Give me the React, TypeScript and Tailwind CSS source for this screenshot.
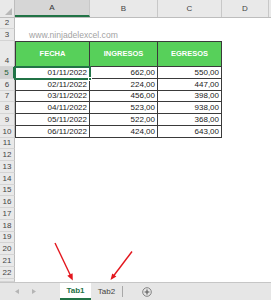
import React from "react";

const data: [string, string, string][] = [
  ["01/11/2022", "662,00", "550,00"],
  ["02/11/2022", "224,00", "447,00"],
  ["03/11/2022", "456,00", "398,00"],
  ["04/11/2022", "523,00", "938,00"],
  ["05/11/2022", "522,00", "368,00"],
  ["06/11/2022", "424,00", "643,00"],
];

function RowHead({ n, selected }: { n?: number; selected?: boolean }) {
  return (
    <div
      className={
        "w-[15px] shrink-0 h-full flex items-end justify-center pb-[1px] text-[8px] leading-none border-b border-[#d4d4d4] " +
        (selected
          ? "bg-[#d2d2d2] text-[#1e5e36] border-r-2 border-r-[#217346]"
          : "bg-[#e9e9e9] text-[#444] border-r border-r-[#bdbdbd]")
      }
    >
      {n}
    </div>
  );
}

export default function App() {
  const empty = Array.from({ length: 12 }, (_, i) => 11 + i);
  return (
    <div className="relative w-[271px] h-[300px] overflow-hidden bg-white flex flex-col font-['Liberation_Sans',Arial,sans-serif]">
      <div className="flex-1 overflow-hidden flex flex-col">
        {/* column header */}
        <div className="h-[17.5px] shrink-0 flex bg-[#e9e9e9] border-b border-[#bdbdbd] text-[8px] text-[#444] leading-none">
          <div className="w-[15px] shrink-0 relative border-r border-[#bdbdbd]">
            <div className="absolute right-[2px] bottom-[2px] w-0 h-0 border-l-[7px] border-l-transparent border-b-[7px] border-b-[#b8b8b8]" />
          </div>
          <div className="w-[75px] shrink-0 flex items-end justify-center pb-[3px] bg-[#d6d6d6] border-r border-[#c8c8c8] border-b-2 border-b-[#217346] text-[#333]">A</div>
          <div className="w-[68px] shrink-0 flex items-end justify-center pb-[4px] border-r border-[#c8c8c8]">B</div>
          <div className="w-[64px] shrink-0 flex items-end justify-center pb-[4px] border-r border-[#c8c8c8]">C</div>
          <div className="w-[47px] shrink-0 flex items-end justify-center pb-[4px] border-r border-[#c8c8c8]">D</div>
          <div className="flex-1" />
        </div>
        {/* row 2 */}
        <div className="h-[11.75px] shrink-0 flex">
          <RowHead n={2} />
        </div>
        {/* row 3 */}
        <div className="h-[11.75px] shrink-0 flex">
          <RowHead n={3} />
          <div className="pl-[14px] flex items-center whitespace-nowrap text-[8.6px] leading-none text-[#a3a3a3]">
            www.ninjadelexcel.com
          </div>
        </div>
        {/* row 4 header */}
        <div className="h-[26px] shrink-0 flex">
          <RowHead n={4} />
          <div className="w-[75px] shrink-0 bg-[#57d05a] border border-[#3a3a3a] flex items-center justify-center text-white font-bold text-[7.5px] leading-none">FECHA</div>
          <div className="w-[68px] shrink-0 bg-[#57d05a] border-y border-r border-[#3a3a3a] flex items-center justify-center text-white font-bold text-[7.5px] leading-none">INGRESOS</div>
          <div className="w-[64px] shrink-0 bg-[#57d05a] border-y border-r border-[#3a3a3a] flex items-center justify-center text-white font-bold text-[7.5px] leading-none">EGRESOS</div>
        </div>
        {data.map((r, i) => (
          <div key={i} className="h-[11.75px] shrink-0 flex">
            <RowHead n={5 + i} selected={i === 0} />
            <div className="w-[75px] shrink-0 border-l border-b border-r border-[#3a3a3a] flex items-end justify-end pr-[2px] pb-[1px] text-[8px] leading-none text-[#1a1a1a]">{r[0]}</div>
            <div className="w-[68px] shrink-0 border-b border-r border-[#3a3a3a] flex items-end justify-end pr-[2px] pb-[1px] text-[8px] leading-none text-[#1a1a1a]">{r[1]}</div>
            <div className="w-[64px] shrink-0 border-b border-r border-[#3a3a3a] flex items-end justify-end pr-[2px] pb-[1px] text-[8px] leading-none text-[#1a1a1a]">{r[2]}</div>
          </div>
        ))}
        {empty.map((n) => (
          <div key={n} className="h-[11.75px] shrink-0 flex">
            <RowHead n={n} />
          </div>
        ))}
        <div className="flex-1 flex">
          <RowHead />
        </div>
      </div>
      {/* tab bar */}
      <div className="h-[18px] shrink-0 bg-[#e6e6e6] border-t border-[#c6c6c6] flex items-stretch text-[8px] leading-none">
        <div className="w-[60px] shrink-0 flex items-center">
          <svg width="4" height="5" viewBox="0 0 4 5" className="ml-[15px]">
            <path d="M4 0 L0 2.5 L4 5 Z" fill="#b5b5b5" />
          </svg>
          <svg width="4" height="5" viewBox="0 0 4 5" className="ml-[13px]">
            <path d="M0 0 L4 2.5 L0 5 Z" fill="#b5b5b5" />
          </svg>
        </div>
        <div className="w-[31px] shrink-0 bg-white border-b-2 border-[#217346] flex items-center justify-center font-bold text-[#1e7145]">Tab1</div>
        <div className="w-[31px] shrink-0 flex items-center justify-center text-[#444]">Tab2</div>
        <div className="w-px my-[3px] bg-[#a8a8a8]" />
        <div className="flex items-center ml-[19px]">
          <svg width="10" height="10" viewBox="0 0 10 10">
            <circle cx="5" cy="5" r="4.3" fill="none" stroke="#777" strokeWidth="0.9" />
            <path d="M5 2.6 V7.4 M2.6 5 H7.4" stroke="#555" strokeWidth="1.1" />
          </svg>
        </div>
      </div>
      {/* selection of A5 */}
      <div className="absolute left-[14px] top-[66px] w-[77px] h-[13.5px] border-2 border-[#217346] pointer-events-none">
        <div className="absolute -right-[3px] -bottom-[3px] w-[4px] h-[4px] bg-[#217346] border border-white" />
      </div>
      {/* red arrows */}
      <svg className="absolute left-0 top-0 pointer-events-none" width="271" height="300" viewBox="0 0 271 300">
        <line x1="55" y1="243" x2="70.5" y2="275.5" stroke="#e3161d" strokeWidth="1.4" />
        <polygon points="72.8,280.5 67.3,275.8 72.6,273.3" fill="#e3161d" />
        <line x1="132" y1="251.5" x2="113.5" y2="276" stroke="#e3161d" strokeWidth="1.4" />
        <polygon points="110.5,280 112.2,273.5 116.4,276.6" fill="#e3161d" />
      </svg>
    </div>
  );
}
